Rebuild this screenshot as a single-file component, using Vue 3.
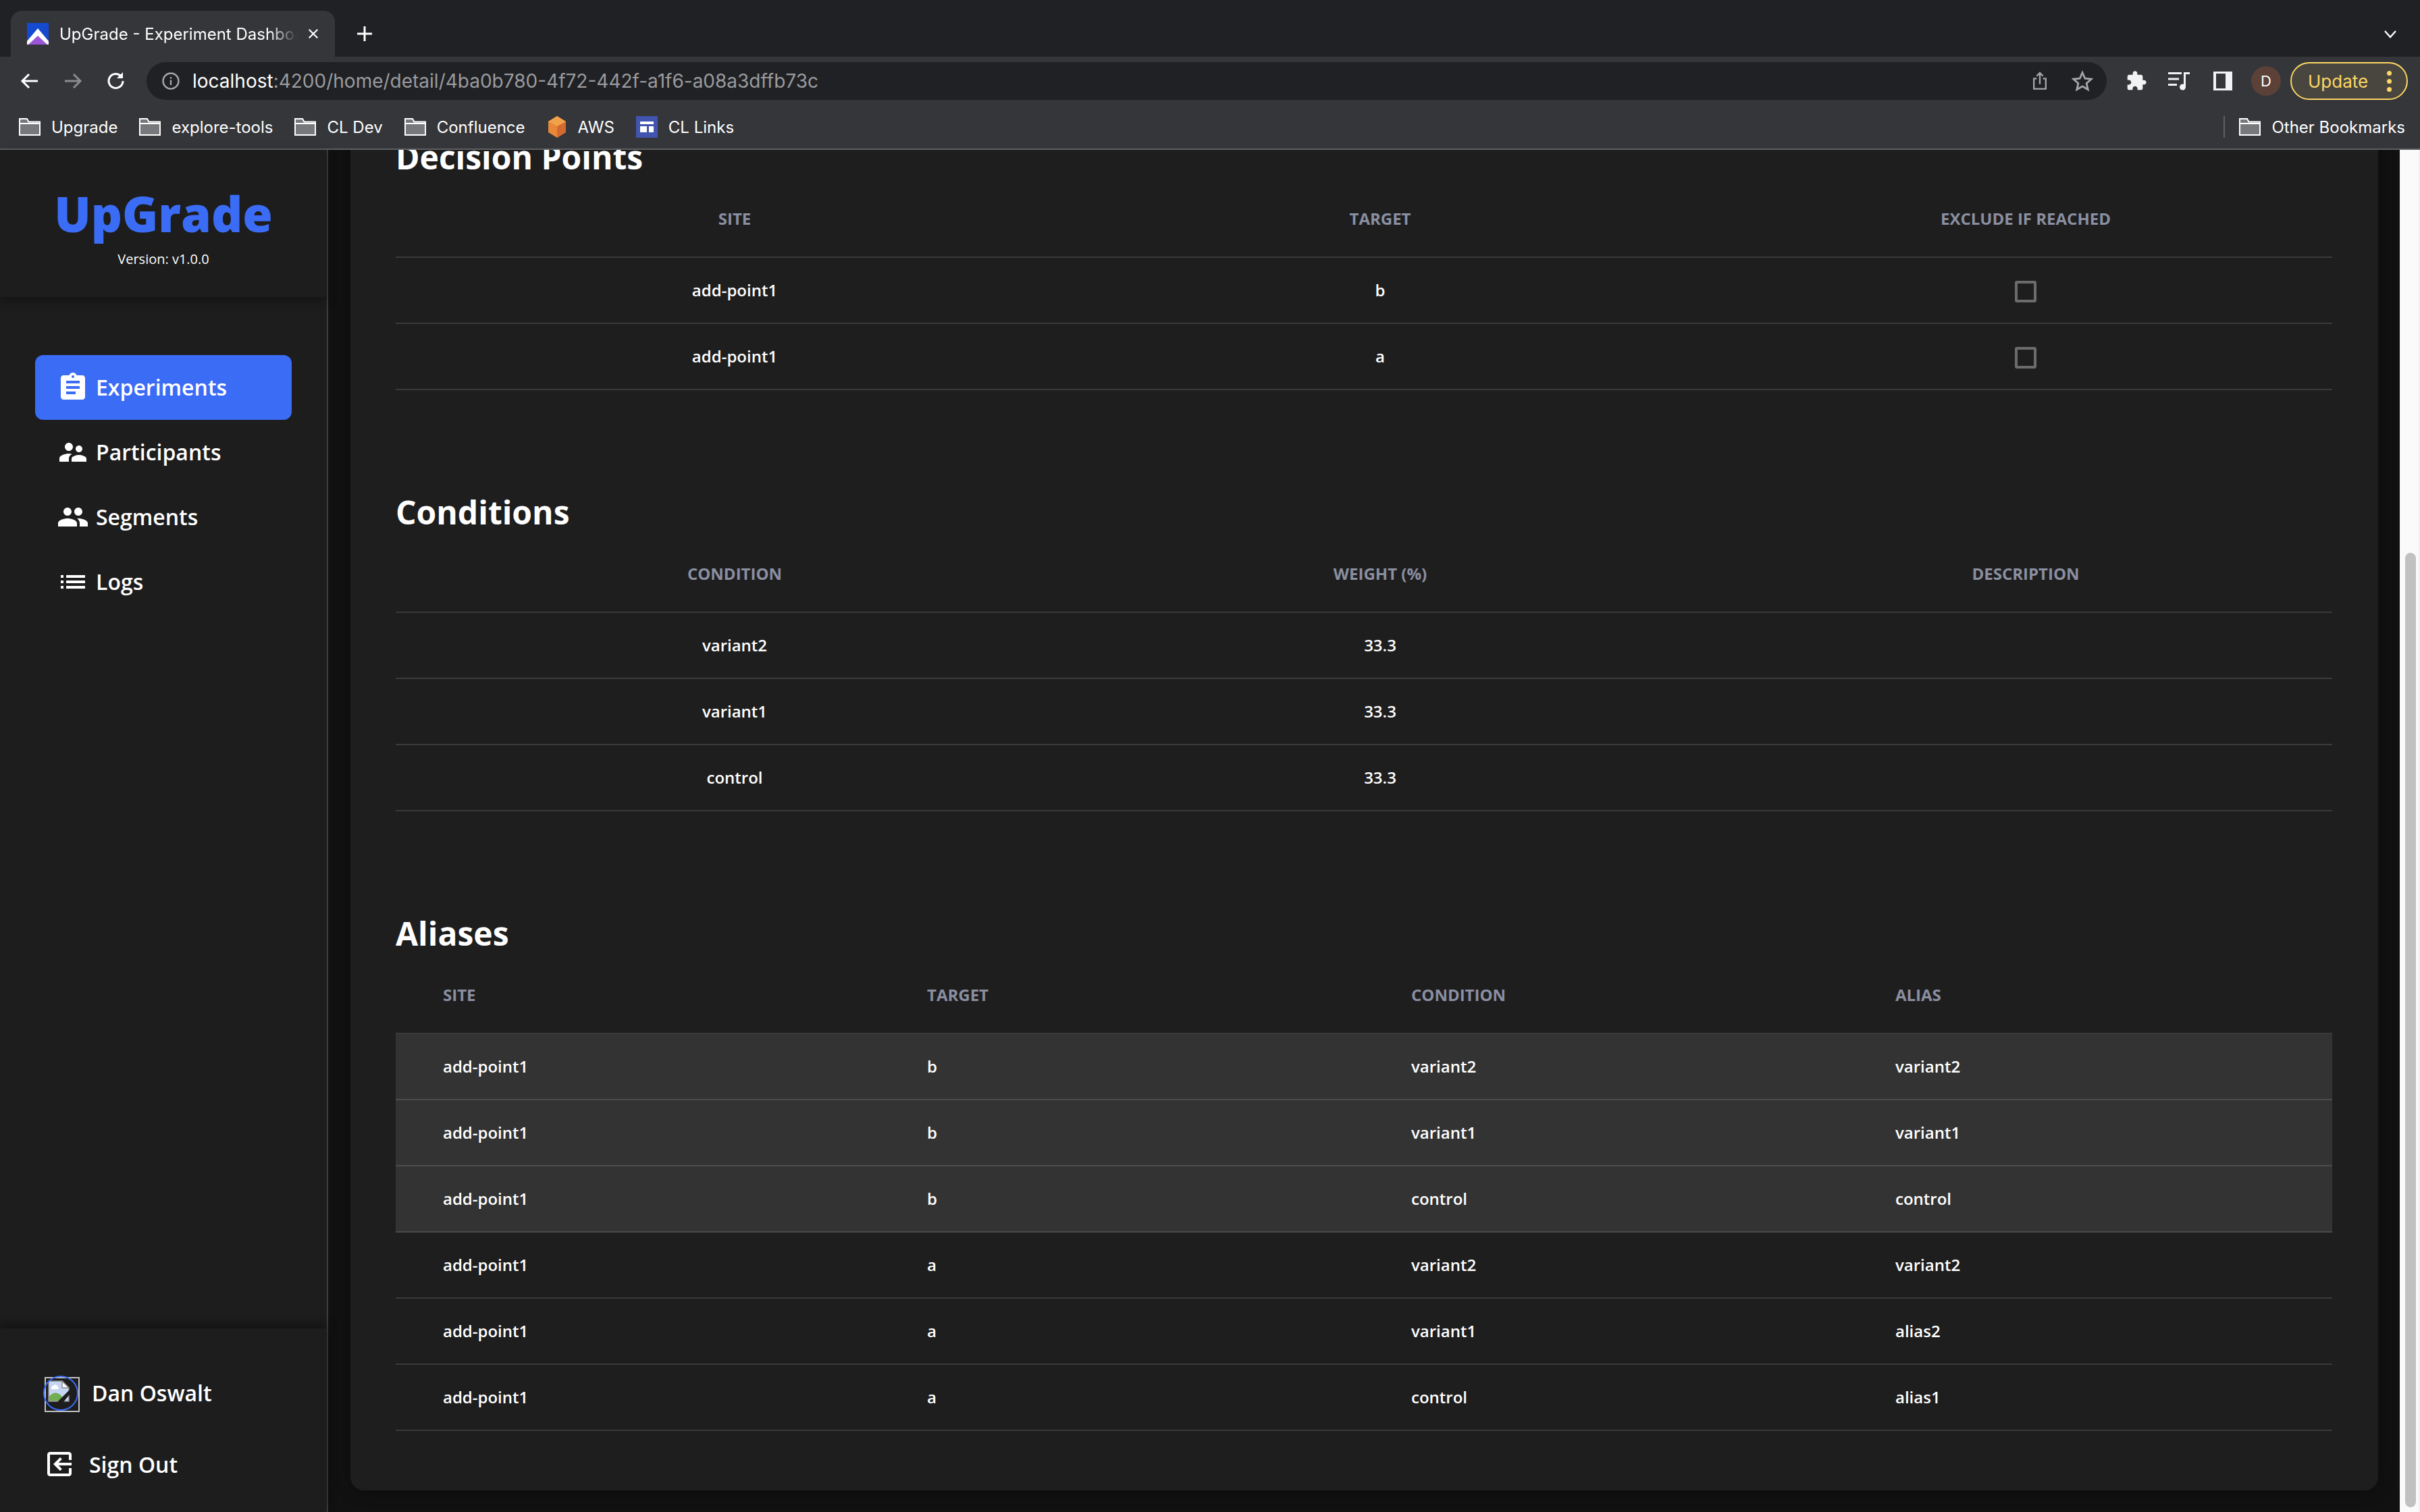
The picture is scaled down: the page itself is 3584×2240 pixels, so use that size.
<script setup>
const bookmarks = [
  { label: 'Upgrade', kind: 'folder' },
  { label: 'explore-tools', kind: 'folder' },
  { label: 'CL Dev', kind: 'folder' },
  { label: 'Confluence', kind: 'folder' },
  { label: 'AWS', kind: 'aws' },
  { label: 'CL Links', kind: 'cl' }
]
const nav = [
  { label: 'Experiments', active: true, d: 'M19 3h-4.18C14.4 1.84 13.3 1 12 1c-1.3 0-2.4.84-2.82 2H5c-1.1 0-2 .9-2 2v14c0 1.1.9 2 2 2h14c1.1 0 2-.9 2-2V5c0-1.1-.9-2-2-2zm-7 0c.55 0 1 .45 1 1s-.45 1-1 1-1-.45-1-1 .45-1 1-1zm2 14H7v-2h7v2zm3-4H7v-2h10v2zm0-4H7V7h10v2z' },
  { label: 'Participants', d: 'M16.5 12c1.38 0 2.49-1.12 2.49-2.5S17.88 7 16.5 7C15.12 7 14 8.12 14 9.5s1.12 2.5 2.5 2.5zM9 11c1.66 0 2.99-1.34 2.99-3S10.66 5 9 5C7.34 5 6 6.34 6 8s1.34 3 3 3zm7.5 3c-1.83 0-5.5.92-5.5 2.75V19h11v-2.25c0-1.83-3.67-2.75-5.5-2.75zM9 13c-2.33 0-7 1.17-7 3.5V19h7v-2.25c0-.85.33-2.34 2.37-3.47C10.5 13.1 9.66 13 9 13z' },
  { label: 'Segments', d: 'M16 11c1.66 0 2.99-1.34 2.99-3S17.66 5 16 5c-1.66 0-3 1.34-3 3s1.34 3 3 3zm-8 0c1.66 0 2.99-1.34 2.99-3S9.66 5 8 5C6.34 5 5 6.34 5 8s1.34 3 3 3zm0 2c-2.33 0-7 1.17-7 3.5V19h14v-2.5c0-2.33-4.67-3.5-7-3.5zm8 0c-.29 0-.62.02-.97.05 1.16.84 1.97 1.97 1.97 3.45V19h6v-2.5c0-2.33-4.67-3.5-7-3.5z' },
  { label: 'Logs', d: 'M3 13h2v-2H3v2zm0 4h2v-2H3v2zm0-8h2V7H3v2zm4 4h14v-2H7v2zm0 4h14v-2H7v2zM7 7v2h14V7H7z' }
]
const decisionRows = [['add-point1', 'b'], ['add-point1', 'a']]
const conditionRows = [['variant2', '33.3', ''], ['variant1', '33.3', ''], ['control', '33.3', '']]
const aliasRows = [
  { cells: ['add-point1', 'b', 'variant2', 'variant2'], hi: true },
  { cells: ['add-point1', 'b', 'variant1', 'variant1'], hi: true },
  { cells: ['add-point1', 'b', 'control', 'control'], hi: true },
  { cells: ['add-point1', 'a', 'variant2', 'variant2'] },
  { cells: ['add-point1', 'a', 'variant1', 'alias2'] },
  { cells: ['add-point1', 'a', 'control', 'alias1'] }
]
</script>

<template>
  <div class="root">
    <header class="chrome">
      <div class="tabstrip">
        <div class="tab">
          <svg class="favicon" viewBox="0 0 32 32">
            <rect width="32" height="32" fill="#1549cf" />
            <path d="M16 8 32 27v5H0v-5z" fill="#fff" />
            <path d="M16 19 30 32H2z" fill="#9a55d8" />
          </svg>
          <span class="tab-title">UpGrade - Experiment Dashboard</span>
          <svg class="tab-close" viewBox="0 0 20 20"><path d="M3 3l14 14M17 3 3 17" stroke="#fff" stroke-width="2.4" /></svg>
        </div>
        <svg class="tab-new" viewBox="0 0 28 28"><path d="M14 3v22M3 14h22" stroke="#fff" stroke-width="3" /></svg>
        <svg class="tab-more" viewBox="0 0 20 14"><path d="M2 2l8 9 8-9" stroke="#fff" stroke-width="2.4" fill="none" /></svg>
      </div>
      <div class="toolbar">
        <svg class="nav-ic" viewBox="0 0 32 32"><path d="M28 16H6M15 6 5 16l10 10" stroke="#fff" stroke-width="3" fill="none" /></svg>
        <svg class="nav-ic" viewBox="0 0 32 32"><path d="M4 16h22M17 6l10 10-10 10" stroke="#8a8b8e" stroke-width="3" fill="none" /></svg>
        <svg class="nav-ic" viewBox="0 0 32 32"><path d="M26 16a10.5 10.5 0 1 1-3-7.4" stroke="#fff" stroke-width="3" fill="none" /><path d="M26 3v9h-9z" fill="#fff" /></svg>
        <div class="omnibox">
          <svg class="info" viewBox="0 0 28 28"><circle cx="14" cy="14" r="11.5" fill="none" stroke="#a4a6a9" stroke-width="2.4" /><path d="M12.8 12.5h2.4V20h-2.4zM12.8 8h2.4v2.4h-2.4z" fill="#a4a6a9" /></svg>
          <span class="url"><span class="host">localhost</span>:4200/home/detail/4ba0b780-4f72-442f-a1f6-a08a3dffb73c</span>
          <span class="spacer"></span>
          <svg class="omni-ic" viewBox="0 0 28 32"><path d="M9 12H4.5V28.500H23.500V12H19" fill="none" stroke="#a4a6a9" stroke-width="2.5" /><path d="M14 21V3M9 8l5-5 5 5" fill="none" stroke="#a4a6a9" stroke-width="2.5" /></svg>
          <svg class="omni-ic star" viewBox="0 0 32 32"><path d="M16 3.5l3.800 8.700 9.400.9-7.100 6.300 2.100 9.300-8.200-4.900-8.200 4.900 2.100-9.300-7.100-6.300 9.400-.9z" fill="none" stroke="#a4a6a9" stroke-width="2.8" /></svg>
        </div>
        <svg class="ext puzzle" viewBox="0 0 24 24"><path d="M20.500 11H19V7c0-1.100-.9-2-2-2h-4V3.500C13 2.120 11.880 1 10.500 1S8 2.120 8 3.500V5H4c-1.100 0-1.990.9-1.990 2v3.800H3.500c1.490 0 2.700 1.210 2.700 2.700s-1.210 2.700-2.700 2.700H2V20c0 1.100.9 2 2 2h3.800v-1.500c0-1.490 1.210-2.700 2.700-2.700 1.490 0 2.700 1.210 2.700 2.700V22H17c1.100 0 2-.9 2-2v-4h1.500c1.380 0 2.500-1.120 2.500-2.500S21.880 11 20.500 11z" fill="#f1f3f4" /></svg>
        <svg class="ext music" viewBox="0 0 32 28"><path d="M0 1h20v3H0zM0 9.500h16v3H0zM0 18h13v3H0z" fill="#f1f3f4" /><path d="M23 1h9v3h-6v19a4.500 4.500 0 1 1-3-4.200z" fill="#f1f3f4" /></svg>
        <div class="panel"></div>
        <div class="avatar">D</div>
        <div class="update"><span>Update</span><span class="dots"><i></i><i></i><i></i></span></div>
      </div>
      <div class="bookmarks">
        <div v-for="b in bookmarks" :key="b.label" class="bm">
          <svg v-if="b.kind === 'folder'" class="bm-ic" viewBox="0 0 32 26"><path d="M1 25V1h11l2.500 4.500H31V25z" fill="#77787b" stroke="#fff" stroke-width="2" /><path d="M1 8h30" stroke="#fff" stroke-width="2" /></svg>
          <svg v-else-if="b.kind === 'aws'" class="bm-ic aws" viewBox="0 0 30 32"><path d="M15 0 28 8v16L15 32 2 24V8z" fill="#e8873a" /><path d="M15 15 28 8v16L15 32z" fill="#d4692f" /><path d="M15 0 28 8 15 15 2 8z" fill="#f2a14b" /></svg>
          <svg v-else class="bm-ic cl" viewBox="0 0 32 32"><rect width="32" height="32" fill="#4154af" /><path d="M6 8h20v4H6zM6 15h10v9H6zM19 15h7v9h-7z" fill="#fff" /></svg>
          <span>{{ b.label }}</span>
        </div>
        <span class="spacer"></span>
        <div class="bm other">
          <svg class="bm-ic" viewBox="0 0 32 26"><path d="M1 25V1h11l2.500 4.500H31V25z" fill="#77787b" stroke="#fff" stroke-width="2" /><path d="M1 8h30" stroke="#fff" stroke-width="2" /></svg>
          <span>Other Bookmarks</span>
        </div>
      </div>
    </header>

    <div class="app">
      <aside class="sidebar">
        <div class="brand">
          <div class="logo">UpGrade</div>
          <div class="version">Version: v1.0.0</div>
        </div>
        <nav class="menu">
          <div v-for="n in nav" :key="n.label" class="item" :class="{ active: n.active }">
            <svg class="item-ic" viewBox="0 0 24 24"><path :d="n.d" fill="#fff" /></svg>
            <span>{{ n.label }}</span>
          </div>
        </nav>
        <div class="foot">
          <div class="user">
            <div class="broken">
              <span class="ring"></span>
              <svg class="broken-ic" viewBox="0 0 32 32">
                <path d="M1 1h20l10 10v20H1z" fill="#c6d6f2" stroke="#8c8c8c" stroke-width="1.5" />
                <path d="M21 1v10h10z" fill="#fff" stroke="#8c8c8c" stroke-width="1.5" />
                <path d="M2 30V24C8 16 18 16 24 30z" fill="#72ad50" />
                <path d="M5 11a3 3 0 0 1 3-3 4 4 0 0 1 7 2 2 2 0 0 1 0 3H6a2 2 0 0 1-1-2z" fill="#fff" />
                <path d="M14 32 32 14v7L23 32z" fill="#1d1d1d" />
              </svg>
            </div>
            <span>Dan Oswalt</span>
          </div>
          <div class="signout">
            <svg class="out-ic" viewBox="3 3 18 18"><path d="M10.090 15.590L11.500 17l5-5-5-5-1.410 1.410L12.670 11H3v2h9.670l-2.580 2.590zM19 3H5c-1.110 0-2 .9-2 2v4h2V5h14v14H5v-4H3v4c0 1.100.89 2 2 2h14c1.100 0 2-.9 2-2V5c0-1.100-.9-2-2-2z" fill="#fff" transform="matrix(-1 0 0 1 24 0)" /></svg>
            <span>Sign Out</span>
          </div>
        </div>
      </aside>

      <main class="main">
        <section class="card">
          <h2>Decision Points</h2>
          <div class="table three">
            <div class="row head"><div>SITE</div><div>TARGET</div><div>EXCLUDE IF REACHED</div></div>
            <div v-for="r in decisionRows" :key="r[1]" class="row">
              <div>{{ r[0] }}</div><div>{{ r[1] }}</div><div><span class="check"></span></div>
            </div>
          </div>

          <h2 class="later">Conditions</h2>
          <div class="table three">
            <div class="row head"><div>CONDITION</div><div>WEIGHT (%)</div><div>DESCRIPTION</div></div>
            <div v-for="r in conditionRows" :key="r[0]" class="row">
              <div>{{ r[0] }}</div><div>{{ r[1] }}</div><div>{{ r[2] }}</div>
            </div>
          </div>

          <h2 class="later">Aliases</h2>
          <div class="table four">
            <div class="row head"><div>SITE</div><div>TARGET</div><div>CONDITION</div><div>ALIAS</div></div>
            <div v-for="(r, i) in aliasRows" :key="i" class="row" :class="{ hi: r.hi }">
              <div v-for="(c, j) in r.cells" :key="j">{{ c }}</div>
            </div>
          </div>
        </section>
      </main>

      <div class="scrollbar"><div class="thumb"></div></div>
    </div>
  </div>
</template>

<style>
html, body { margin: 0; padding: 0; background: #111; }
</style>

<style scoped>
* { box-sizing: border-box; }
.root { width: 3584px; height: 2240px; display: flex; flex-direction: column; overflow: hidden; font-family: "Open Sans", "Noto Sans", sans-serif; color: #fff; }
.spacer { flex: 1; }

/* browser chrome */
.chrome { height: 222px; flex: none; background: #35363a; border-bottom: 2px solid #5f6063; font-family: Inter, "Liberation Sans", sans-serif; }
.tabstrip { height: 84px; background: #202124; display: flex; align-items: flex-end; padding-left: 16px; position: relative; }
.tab { width: 480px; height: 68px; background: #35363a; border-radius: 16px 16px 0 0; display: flex; align-items: center; padding: 0 20px 0 24px; }
.favicon { width: 32px; height: 32px; flex: none; }
.tab-title { margin-left: 16px; width: 352px; font-size: 24px; white-space: nowrap; overflow: hidden; color: #fff; -webkit-mask-image: linear-gradient(90deg, #000 88%, transparent 100%); mask-image: linear-gradient(90deg, #000 88%, transparent 100%); }
.tab-close { width: 18px; height: 18px; margin-left: 15px; flex: none; }
.tab-new { width: 28px; height: 28px; margin: 0 0 20px 30px; flex: none; }
.tab-more { position: absolute; right: 34px; top: 44px; width: 20px; height: 14px; }
.toolbar { height: 64px; padding-top: 8px; display: flex; align-items: center; padding-left: 28px; }
.nav-ic { width: 32px; height: 32px; flex: none; margin-right: 32px; }
.omnibox { width: 2903px; height: 56px; margin-left: -3px; background: #202124; border-radius: 28px; display: flex; align-items: center; padding: 0 20px 0 22px; }
.info { width: 28px; height: 28px; flex: none; }
.url { margin-left: 18px; font-size: 28px; color: #9a9b9e; white-space: nowrap; }
.host { color: #fff; }
.omni-ic { width: 26px; height: 30px; margin-right: 34px; flex: none; }
.star { width: 32px; height: 32px; margin-right: 0; }
.ext { flex: none; }
.puzzle { width: 34px; height: 32px; margin-left: 27px; }
.music { width: 32px; height: 28px; margin-left: 30px; }
.panel { width: 28px; height: 28px; margin-left: 35px; border: solid #f1f3f4; border-width: 3px 10px 3px 4px; flex: none; }
.avatar { width: 44px; height: 44px; border-radius: 50%; margin-left: 28px; background: #5b4137; display: flex; align-items: center; justify-content: center; font-size: 22px; flex: none; }
.update { width: 174px; height: 56px; margin-left: 14px; border: 2px solid #fdd663; border-radius: 28px; background: #48463f; color: #fdd663; font-size: 26px; display: flex; align-items: center; padding-left: 24px; flex: none; }
.dots { margin-left: 28px; display: flex; flex-direction: column; gap: 5px; }
.dots i { width: 7px; height: 7px; border-radius: 50%; background: #fdd663; display: block; }
.bookmarks { height: 72px; display: flex; align-items: center; padding: 8px 22px 0 28px; font-size: 24px; }
.bm { display: flex; align-items: center; margin-right: 32px; white-space: nowrap; }
.bm span { margin-left: 16px; }
.bm-ic { width: 32px; height: 26px; flex: none; }
.aws { width: 30px; height: 32px; }
.cl { height: 32px; }
.other { margin-right: 0; border-left: 2px solid #5f6063; padding-left: 21px; height: 32px; }

/* app */
.app { flex: 1; min-height: 0; display: flex; background: #111; }
.sidebar { width: 486px; flex: none; background: #1d1d1d; border-right: 2px solid #3d3d3d; display: flex; flex-direction: column; }
.brand { height: 218px; padding-top: 44px; text-align: center; box-shadow: 0 6px 14px rgba(0, 0, 0, .35); position: relative; }
.logo { font-size: 72px; line-height: 100px; font-weight: 800; color: #3b6cf6; }
.version { font-size: 20px; line-height: 28px; margin-top: 4px; }
.menu { flex: 1; padding: 86px 52px 0; display: flex; flex-direction: column; }
.item { height: 96px; display: flex; align-items: center; padding-left: 32px; border-radius: 12px; font-size: 32px; font-weight: 600; }
.item span { margin-top: -2px; }
.item.active { background: #3b6cf6; }
.item-ic { width: 48px; height: 48px; margin-right: 10px; flex: none; }
.foot { height: 272px; box-shadow: 0 -6px 14px rgba(0, 0, 0, .4); padding: 72px 0 0 66px; font-size: 32px; font-weight: 600; position: relative; }
.user { display: flex; align-items: center; height: 52px; }
.user > span { margin-left: 18px; margin-top: -6px; }
.broken { width: 52px; height: 52px; border: 2px solid #c4c4c4; position: relative; flex: none; padding: 3px; }
.ring { position: absolute; left: -4px; top: -4px; width: 52px; height: 52px; border: 2px solid #3b6cf6; border-radius: 50%; }
.broken-ic { width: 32px; height: 32px; display: block; }
.signout { display: flex; align-items: center; margin-top: 57px; padding-left: 4px; height: 40px; }
.out-ic { width: 36px; height: 36px; flex: none; }
.signout span { margin-left: 26px; margin-top: 1px; }

.main { flex: 1; min-width: 0; display: flex; flex-direction: column; justify-content: flex-end; overflow: hidden; padding: 0 32px 32px 33px; }
.card { flex: none; background: #1e1e1e; border-radius: 0 0 20px 20px; padding: 0 68px 88px 67px; box-shadow: 0 0 24px rgba(0, 0, 0, .35); }
h2 { margin: 0; padding-bottom: 2px; font-size: 48px; line-height: 66px; font-weight: 700; color: #fff; }
h2.later { margin-top: 148px; }
.row { display: grid; height: 98px; padding-bottom: 2px; border-bottom: 2px solid #3a3a3a; align-items: center; font-size: 24px; font-weight: 600; }
.row.head { height: 114px; font-weight: 700; color: #8a8fa1; border-bottom-color: #3a3a3a; }
.three .row { grid-template-columns: repeat(3, 1fr); text-align: center; }
.three .row > div { padding-left: 48px; }
.four .row { grid-template-columns: 717px 717px 717px 1fr; padding-left: 70px; }
.row.hi { background: #333; border-bottom-color: #4c4c4c; }
.check { display: inline-block; width: 32px; height: 32px; margin-top: 5px; border: 4px solid #6c6c6c; border-radius: 3px; vertical-align: middle; }

.scrollbar { width: 30px; flex: none; background: #fafafa; border-right: 2px solid #eee; border-left: 1px solid #f2f2f2; position: relative; }
.thumb { position: absolute; left: 7px; width: 16px; top: 597px; bottom: 7px; background: #c1c1c1; border-radius: 8px; }
</style>
